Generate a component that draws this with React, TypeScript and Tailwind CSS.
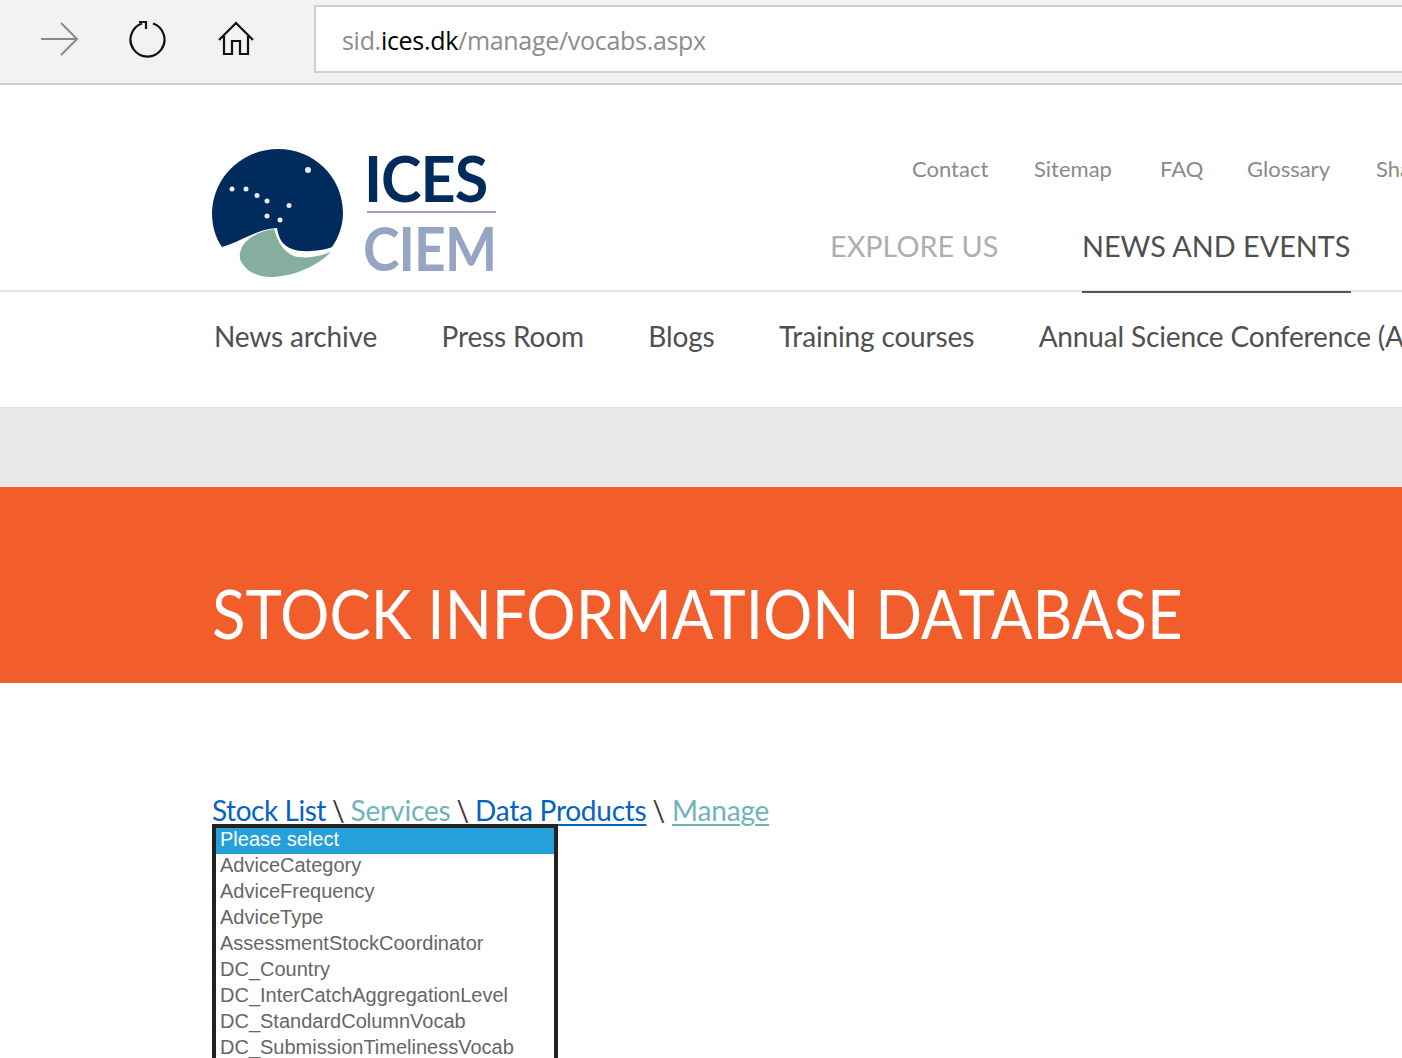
const font = "font-['Lato','Liberation_Sans',sans-serif]";

const topLinks = [
  { label: "Contact", width: "w-[122px]" },
  { label: "Sitemap", width: "w-[126px]" },
  { label: "FAQ", width: "w-[87px]" },
  { label: "Glossary", width: "w-[129px]" },
  { label: "Share", width: "w-[60px]" },
];

const subLinks = ["News archive", "Press Room", "Blogs", "Training courses", "Annual Science Conference (ASC)"];

const vocabs = [
  "AdviceCategory",
  "AdviceFrequency",
  "AdviceType",
  "AssessmentStockCoordinator",
  "DC_Country",
  "DC_InterCatchAggregationLevel",
  "DC_StandardColumnVocab",
  "DC_SubmissionTimelinessVocab",
];

function Logo() {
  return (
    <div className="flex h-[128px] w-[285px] shrink-0">
      <svg width="132" height="128" viewBox="0 0 132 128" className="shrink-0">
        <path
          d="M10 98C3 88 0 76 0 64C1 28 30 0 66 0C102 0 131 28 131 64C131 76 127 88 120 98C110 102 90 104 80 100C70 96 67 90 65 79C50 80 40 86 30 90C22 94 16 96 10 98Z"
          fill="#002b5c"
        />
        <path
          d="M62 80C46 82 34 90 30 98C27 104 27 110 30 114C36 124 48 128 58 128C80 128 104 118 119 103C106 108 92 110 82 107C72 103 66 94 62 80Z"
          fill="#86ae9f"
        />
        {[
          [96, 21, 3],
          [20, 40, 2.5],
          [34, 40, 2.5],
          [45, 46.5, 2.5],
          [55, 52, 2.5],
          [77, 56.5, 2.5],
          [55, 67, 2.5],
          [68, 71, 2.5],
        ].map(([cx, cy, r]) => (
          <circle key={`${cx}-${cy}`} cx={cx} cy={cy} r={r} fill="#e8edf2" />
        ))}
      </svg>
      <div className={`ml-[19px] flex flex-col ${font}`}>
        <div className="h-[62px] origin-left scale-x-[0.97] pl-[1px] text-[63px] leading-[58px] font-bold tracking-[-1px] text-[#002b5c]">ICES</div>
        <div className="ml-[4px] h-[2px] w-[129px] bg-[#97a5c4]" />
        <div className="mt-[1px] h-[60px] origin-left scale-x-[0.89] text-[62px] leading-[67px] font-bold tracking-[-1px] text-[#97a5c4]">CIEM</div>
      </div>
    </div>
  );
}

export default function App() {
  return (
    <div className={`h-[1058px] w-[1402px] overflow-hidden bg-white ${font}`}>
      <div className="flex h-[85px] items-start border-b-2 border-[#cdcdcd] bg-[#f2f2f2]">
        <div className="flex h-[78px] w-[314px] shrink-0 items-center pl-[41px]">
          <svg width="38" height="36" viewBox="0 0 38 36" fill="none" stroke="#8a8a8a" strokeWidth="2">
            <path d="M0 18H36M20 2L36 18L20 34" />
          </svg>
          <svg width="38" height="38" viewBox="0 0 38 38" fill="none" stroke="#111" strokeWidth="2.2" className="ml-[50px]">
            <path d="M24 3.5A17 17 0 1 1 13 3.5M10 2H17V9" />
          </svg>
          <svg width="36" height="36" viewBox="0 0 36 36" fill="none" stroke="#111" strokeWidth="2.2" className="ml-[51px]">
            <path d="M1 19L18 2L35 19M6 15V33H14V20H22V33H30V15" />
          </svg>
        </div>
        <div className="mt-[5px] flex h-[68px] flex-1 items-center border-2 border-r-0 border-[#cfcfcf] bg-white pl-[26px] pt-[3px] font-['Open_Sans',sans-serif] text-[25px] tracking-[-0.3px] text-[#8c8c8c]">
          sid.<span className="text-black">ices.dk</span>/manage/vocabs.aspx
        </div>
      </div>

      <div className="relative flex h-[207px] border-b-2 border-[#e4e4e4] pl-[212px]">
        <div className="pt-[64px]">
          <Logo />
        </div>
        <div className="ml-[333px] flex min-w-0 flex-1 flex-col overflow-hidden">
          <div className="mt-[68px] flex h-[30px] items-center whitespace-nowrap pl-[82px] text-[22px] text-[#8a8a8a]">
            {topLinks.map((link) => (
              <span key={link.label} className={`${link.width} shrink-0`}>{link.label}</span>
            ))}
          </div>
          <div className="mt-[44px] flex h-[40px] items-center whitespace-nowrap text-[28.8px] uppercase">
            <span className="w-[252px] shrink-0 text-[#aeaeae]">Explore us</span>
            <span className="text-[#4f4f4f]">News and events</span>
          </div>
        </div>
        <div className="absolute left-[1082px] top-[206px] h-[2px] w-[269px] bg-[#555]" />
      </div>

      <div className="flex h-[115px] items-start gap-[64.5px] overflow-hidden whitespace-nowrap pl-[214px] pt-[27px] text-[28px] leading-[34px] tracking-[-0.15px] text-[#505050]">
        {subLinks.map((link) => (
          <span key={link} className="shrink-0">{link}</span>
        ))}
      </div>

      <div className="h-[80px] border-t border-[#e0e2e1] bg-[#e7e9e8]" />

      <div className="flex h-[196px] items-center bg-[#f25e2b] pl-[212px] pt-[56px] text-[68px] leading-none text-white">
        <span className="origin-left scale-x-[0.908] whitespace-nowrap">STOCK INFORMATION DATABASE</span>
      </div>

      <div className="pl-[212px] pt-[114px]">
        <div className="flex h-[27px] items-center whitespace-nowrap text-[28px] leading-[31px] tracking-[-0.15px] text-[#3a3a3a]">
          <a className="tracking-[-0.45px] text-[#0563c1] underline decoration-2 underline-offset-[3px]">Stock List</a>
          <span className="mx-[6px]">\</span>
          <span className="text-[#6fb4bb]">Services</span>
          <span className="mx-[6px]">\</span>
          <a className="tracking-[-0.25px] text-[#0563c1] underline decoration-2 underline-offset-[3px]">Data Products</a>
          <span className="ml-[6px] mr-[7px]">\</span>
          <a className="text-[#6fb4bb] underline decoration-2 underline-offset-[3px]">Manage</a>
        </div>
        <div className="relative h-[300px] w-[346px] border-4 border-[#222] bg-white font-['Liberation_Sans',sans-serif] text-[20px] leading-[22px] text-[#666]">
          <div className="h-[26px] bg-[#26a0da] pl-[4px] text-white">Please select</div>
          {vocabs.map((vocab) => (
            <div key={vocab} className="h-[26px] pl-[4px]">{vocab}</div>
          ))}
        </div>
      </div>
    </div>
  );
}
